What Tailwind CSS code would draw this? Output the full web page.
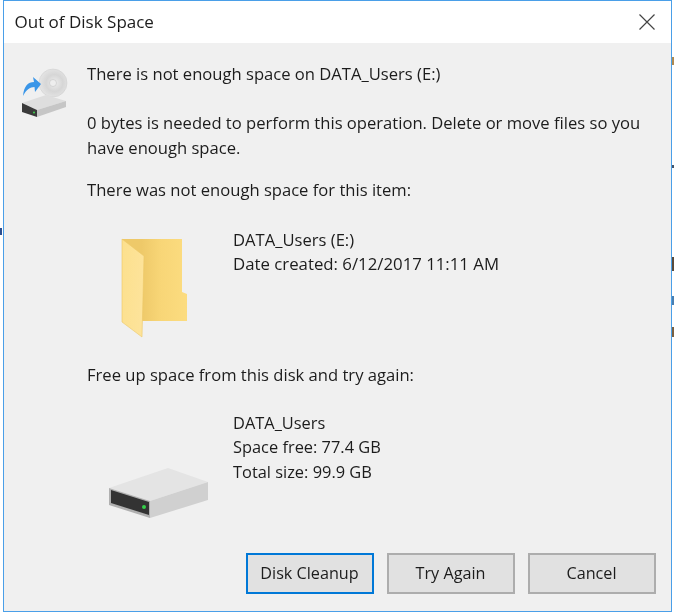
<!DOCTYPE html>
<html lang="en">

<head>
  <meta charset="UTF-8">
  <title>Out of Disk Space</title>
  <script src="https://cdn.jsdelivr.net/npm/@tailwindcss/browser@4"></script>
</head>

<body class="bg-white w-[674px] h-[615px] overflow-hidden relative font-['Open_Sans',sans-serif] text-[16.6px] leading-[24.4px] text-[#1c1c1c]">

  <!-- bits of the window behind -->
  <div class="absolute left-[672px] top-[57px] w-[2px] h-[8px] bg-[#b08a50]"></div>
  <div class="absolute left-[672px] top-[165px] w-[2px] h-[3px] bg-[#44556a]"></div>
  <div class="absolute left-[672px] top-[257px] w-[2px] h-[14px] bg-[#5a4a3a]"></div>
  <div class="absolute left-[672px] top-[296px] w-[2px] h-[9px] bg-[#4a7fb0]"></div>
  <div class="absolute left-[672px] top-[327px] w-[2px] h-[10px] bg-[#7a6040]"></div>
  <div class="absolute left-0 top-[228px] w-[2px] h-[7px] bg-[#2c4f8f]"></div>

  <!-- dialog -->
  <div class="ml-[3px] w-[669px] h-[612px] border-[1.5px] border-[#4a9fe8] bg-[#f0f0f0] flex flex-col blur-[0.35px]">

    <!-- title bar -->
    <div class="h-[42px] shrink-0 bg-white flex items-center justify-between pl-[10.5px] pr-[15px]">
      <span class="text-[17px]">Out of Disk Space</span>
      <svg class="w-[18px] h-[18px]" viewBox="0 0 18 18" fill="none" stroke="#444" stroke-width="1.2">
        <path d="M1.5 1.5 L16.5 16.5 M16.5 1.5 L1.5 16.5" />
      </svg>
    </div>

    <!-- body -->
    <div class="flex-1 flex pt-[19px]">
      <div class="w-[83px] shrink-0 pl-[16px] pt-[3px]">
        <svg class="w-[50px] h-[54px]" viewBox="20 66 50 54">
          <defs>
            <radialGradient id="disc" cx="0.55" cy="0.5" r="0.6">
              <stop offset="0" stop-color="#eeeeee" />
              <stop offset="0.5" stop-color="#d6d6d6" />
              <stop offset="1" stop-color="#e8e8e8" />
            </radialGradient>
          </defs>
          <circle cx="53" cy="84" r="14" fill="url(#disc)" stroke="#cccccc" stroke-width="0.5" />
          <circle cx="53" cy="84" r="3.5" fill="#eeeeee" stroke="#c4c4c4" stroke-width="0.6" />
          <path d="M22 104 L46 96 L66 102 L37 111 Z" fill="#dedede" />
          <path d="M37 111 L66 102 L66 108 L37 118 Z" fill="#c6c6c6" />
          <path d="M22 104 L37 111 L37 118 L22 113 Z" fill="#3a3a3a" />
          <circle cx="34" cy="113.5" r="1" fill="#3fd44f" />
          <path d="M23 97 C24 87 28 83 34 83 L33 78 L41 85 L35 93 L34.5 88 C30 88 26 91 23 97 Z" fill="#3a96e8" />
        </svg>
      </div>

      <div class="flex-1 flex flex-col">
        <p>There is not enough space on DATA_Users (E:)</p>
        <p class="mt-[25px] w-[570px]">0 bytes is needed to perform this operation. Delete or move files so you have enough space.</p>
        <p class="mt-[18px]">There was not enough space for this item:</p>

        <div class="flex mt-[25px] h-[122px]">
          <div class="w-[146px] shrink-0 pl-[30px] pt-[10px]">
            <svg class="w-[70px] h-[104px]" viewBox="117 238 70 104">
              <defs>
                <linearGradient id="back" x1="0" x2="1" y1="0" y2="0">
                  <stop offset="0.3" stop-color="#eec969" />
                  <stop offset="0.6" stop-color="#f8d677" />
                  <stop offset="1" stop-color="#fcdc80" />
                </linearGradient>
                <linearGradient id="front" x1="0" x2="1" y1="0" y2="0.3">
                  <stop offset="0" stop-color="#fce08d" />
                  <stop offset="1" stop-color="#fde39a" />
                </linearGradient>
              </defs>
              <path d="M122 239 L182 239 L182 292 L187 294 L187 321 L142 321 L122 322 Z" fill="url(#back)" />
              <path d="M122 239 L144 256 L142 337 L122 322 Z" fill="url(#front)" stroke="#ecc766" stroke-width="0.6" />
            </svg>
          </div>
          <div>
            <p>DATA_Users (E:)</p>
            <p class="text-[16.8px]">Date created: 6/12/2017 11:11 AM</p>
          </div>
        </div>

        <p class="mt-[13px]">Free up space from this disk and try again:</p>

        <div class="flex mt-[24px]">
          <div class="w-[146px] shrink-0 pl-[18px] pt-[51px]">
            <svg class="w-[110px] h-[62px]" viewBox="105 462 110 62">
              <path d="M109 488 L168 468 L208 482 L150 501 Z" fill="#e4e4e4" />
              <path d="M150 501 L208 482 L208 500 L150 518 Z" fill="#d0d0d0" />
              <path d="M109 488 L150 501 L150 518 L109 505 Z" fill="#b0b0b0" />
              <path d="M111 490 L149 502 L149 515 L111 503 Z" fill="#333333" />
              <circle cx="144" cy="507" r="2" fill="#35d04a" />
            </svg>
          </div>
          <div class="text-[16.4px]">
            <p>DATA_Users</p>
            <p>Space free: 77.4 GB</p>
            <p>Total size: 99.9 GB</p>
          </div>
        </div>
      </div>
    </div>

    <!-- buttons -->
    <div class="flex justify-end gap-[13px] pr-[15.5px] pb-[17px] text-[16.2px]">
      <button class="w-[128px] h-[41px] bg-[#e1e1e1] border-2 border-[#0078d7]">Disk Cleanup</button>
      <button class="w-[128px] h-[41px] bg-[#e1e1e1] border-2 border-[#adadad]">Try Again</button>
      <button class="w-[128px] h-[41px] bg-[#e1e1e1] border-2 border-[#adadad]">Cancel</button>
    </div>
  </div>

</body>

</html>
